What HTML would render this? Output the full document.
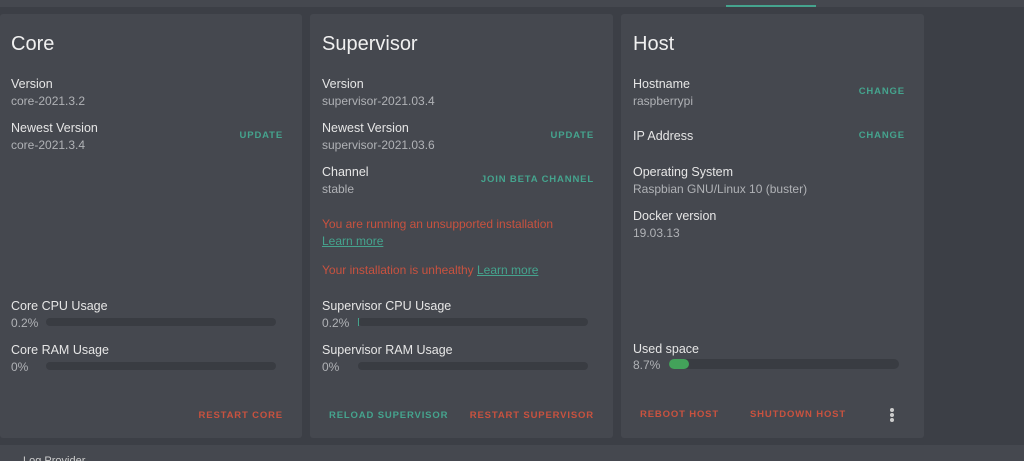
<!DOCTYPE html>
<html><head><style>
html,body{margin:0;width:1024px;height:461px;overflow:hidden}
body{background:#3c3f46;font-family:"Liberation Sans",sans-serif;position:relative}
.a{position:absolute;white-space:nowrap}
.card{position:absolute;top:14px;height:424px;background:#45484f;border-radius:3px}
.t{font-size:20px;color:#f0f0f0}
.l{font-size:12.5px;color:#e6e6e6}
.v{font-size:12px;color:#b0b2b6}
.b{font-size:9.5px;letter-spacing:0.85px;font-weight:bold}
.g{color:#45a48e}.r{color:#c9523f}
.e{font-size:12px;color:#c9523f}
.u{color:#45a48e;text-decoration:underline}
.bar{position:absolute;height:8px;background:#393c42;border-radius:4px}
</style></head><body>
<div class="a" style="left:0;top:0;width:1024px;height:7px;background:#45484f"></div>
<div class="a" style="left:726px;top:5px;width:90px;height:2px;background:#45a48e"></div>
<div class="a" style="left:0;top:445px;width:1024px;height:16px;background:#45484f;overflow:hidden"><div class="a" style="left:23px;top:10px;font-size:11px;color:#ccc">Log Provider</div></div>

<div class="card" style="left:0;width:302px"></div>
<div class="card" style="left:310px;width:303px"></div>
<div class="card" style="left:621px;width:303px"></div>

<div class="a t" style="left:11px;top:33px">Core</div>
<div class="a l" style="left:11px;top:77px">Version</div>
<div class="a v" style="left:11px;top:94px">core-2021.3.2</div>
<div class="a l" style="left:11px;top:121px">Newest Version</div>
<div class="a v" style="left:11px;top:138px">core-2021.3.4</div>
<div class="a b g" style="right:741px;top:130px">UPDATE</div>
<div class="a l" style="left:11px;top:299px">Core CPU Usage</div>
<div class="a v" style="left:11px;top:316px">0.2%</div>
<div class="bar" style="left:46px;top:318px;width:230px"></div>
<div class="a l" style="left:11px;top:343px">Core RAM Usage</div>
<div class="a v" style="left:11px;top:360px">0%</div>
<div class="bar" style="left:46px;top:362px;width:230px"></div>
<div class="a b r" style="right:741px;top:410px">RESTART CORE</div>

<div class="a t" style="left:322px;top:33px">Supervisor</div>
<div class="a l" style="left:322px;top:77px">Version</div>
<div class="a v" style="left:322px;top:94px">supervisor-2021.03.4</div>
<div class="a l" style="left:322px;top:121px">Newest Version</div>
<div class="a v" style="left:322px;top:138px">supervisor-2021.03.6</div>
<div class="a b g" style="right:430px;top:130px">UPDATE</div>
<div class="a l" style="left:322px;top:165px">Channel</div>
<div class="a v" style="left:322px;top:182px">stable</div>
<div class="a b g" style="right:430px;top:174px">JOIN BETA CHANNEL</div>
<div class="a e" style="left:322px;top:217px">You are running an unsupported installation</div>
<div class="a e u" style="left:322px;top:234px">Learn more</div>
<div class="a e" style="left:322px;top:263px">Your installation is unhealthy <span class="u">Learn more</span></div>
<div class="a l" style="left:322px;top:299px">Supervisor CPU Usage</div>
<div class="a v" style="left:322px;top:316px">0.2%</div>
<div class="bar" style="left:358px;top:318px;width:230px"></div>
<div class="a" style="left:358px;top:318px;width:1px;height:8px;background:#45a48e"></div>
<div class="a l" style="left:322px;top:343px">Supervisor RAM Usage</div>
<div class="a v" style="left:322px;top:360px">0%</div>
<div class="bar" style="left:358px;top:362px;width:230px"></div>
<div class="a b g" style="left:329px;top:410px">RELOAD SUPERVISOR</div>
<div class="a b r" style="right:430px;top:410px">RESTART SUPERVISOR</div>

<div class="a t" style="left:633px;top:33px">Host</div>
<div class="a l" style="left:633px;top:77px">Hostname</div>
<div class="a v" style="left:633px;top:94px">raspberrypi</div>
<div class="a b g" style="right:119px;top:86px">CHANGE</div>
<div class="a l" style="left:633px;top:129px">IP Address</div>
<div class="a b g" style="right:119px;top:130px">CHANGE</div>
<div class="a l" style="left:633px;top:165px">Operating System</div>
<div class="a v" style="left:633px;top:182px">Raspbian GNU/Linux 10 (buster)</div>
<div class="a l" style="left:633px;top:209px">Docker version</div>
<div class="a v" style="left:633px;top:226px">19.03.13</div>
<div class="a l" style="left:633px;top:342px">Used space</div>
<div class="a v" style="left:633px;top:358px">8.7%</div>
<div class="bar" style="left:669px;top:359px;width:230px;height:10px;border-radius:5px"></div>
<div class="a" style="left:669px;top:359px;width:20px;height:10px;border-radius:5px;background:#43a25a"></div>
<div class="a b r" style="left:640px;top:409px">REBOOT HOST</div>
<div class="a b r" style="left:750px;top:409px">SHUTDOWN HOST</div>
<div class="a" style="left:890px;top:408px;width:4px;height:4px;border-radius:2px;background:#ccc"></div>
<div class="a" style="left:890px;top:413px;width:4px;height:4px;border-radius:2px;background:#ccc"></div>
<div class="a" style="left:890px;top:418px;width:4px;height:4px;border-radius:2px;background:#ccc"></div>
</body></html>
